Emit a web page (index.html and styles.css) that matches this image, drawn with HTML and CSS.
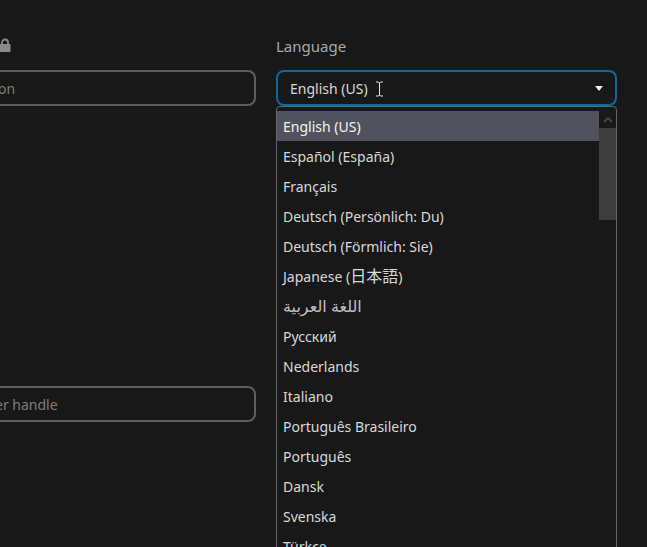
FILE: index.html
```html
<!DOCTYPE html>
<html lang="en">
<head>
    <meta charset="UTF-8">
    <meta name="viewport" content="width=device-width, initial-scale=1.0">
    <title>Settings</title>
    <link rel="stylesheet" href="styles.css">
</head>
<body>
    <div class="settings">
        <div class="column">
            <div class="field">
                <label class="field-label">My location
                    <svg class="lock" viewBox="0 0 12 14" width="12" height="14">
                        <path d="M3 7V4.5a3 3 0 0 1 6 0V7" fill="none" stroke="#8a8a8a" stroke-width="1.8"/>
                        <rect x="0.5" y="6" width="11" height="8" rx="0.8" fill="#8a8a8a"/>
                    </svg>
                </label>
                <input class="text-input" type="text" placeholder="Your location">
            </div>
            <div class="field field-handle">
                <input class="text-input" type="text" placeholder="Your Twitter handle">
            </div>
        </div>
        <div class="column">
            <div class="field">
                <label class="field-label">Language</label>
                <div class="select">
                    <span>English (US)</span>
                    <svg class="ibeam" viewBox="0 0 9 16" width="9" height="16">
                        <path d="M1 1h2.5L4.5 2l1-1H8M4.5 2v12M1 15h2.5l1-1 1 1H8" fill="none" stroke="#e8e8e8" stroke-width="1"/>
                    </svg>
                    <span class="caret"></span>
                </div>
                <div class="dropdown">
                    <ul class="options">
                        <li class="selected">English (US)</li>
                        <li>Español (España)</li>
                        <li>Français</li>
                        <li>Deutsch (Persönlich: Du)</li>
                        <li>Deutsch (Förmlich: Sie)</li>
                        <li class="tall">Japanese (<span class="kanji" lang="ja">日本語</span>)</li>
                        <li class="tall arabic">اللغة العربية</li>
                        <li>Русский</li>
                        <li>Nederlands</li>
                        <li>Italiano</li>
                        <li>Português Brasileiro</li>
                        <li>Português</li>
                        <li>Dansk</li>
                        <li>Svenska</li>
                        <li>Türkçe</li>
                    </ul>
                    <div class="scrollbar">
                        <div class="scroll-up">
                            <svg viewBox="0 0 10 6" width="10" height="6">
                                <path d="M1 5l4-4 4 4" fill="none" stroke="#444" stroke-width="2"/>
                            </svg>
                        </div>
                        <div class="scroll-thumb"></div>
                    </div>
                </div>
            </div>
        </div>
    </div>
</body>
</html>
```

FILE: styles.css
```css
html, body {
    height: 100%;
    overflow: hidden;
}
body {
    margin: 0;
    background-color: #181818;
    color: #d8d8d8;
    font-family: 'Noto Sans', 'DejaVu Sans', 'Noto Sans CJK JP', sans-serif;
    font-size: 14px;
}
.settings {
    display: grid;
    grid-template-columns: 341px 341px;
    gap: 20px;
    margin-left: -85px;
    padding-top: 35px;
}
.field {
    position: relative;
}
.field-handle {
    margin-top: 280px;
}
.field-label {
    display: flex;
    align-items: center;
    gap: 3px;
    height: 22px;
    margin-bottom: 13px;
    font-size: 15px;
    color: #a8a8a8;
}
.lock {
    display: block;
    margin-top: -3px;
}
.text-input {
    display: block;
    box-sizing: border-box;
    width: 100%;
    height: 36px;
    padding: 0 12px;
    background: transparent;
    border: 2px solid #5e5e5e;
    border-radius: 8px;
    font: inherit;
    color: #d8d8d8;
    outline: none;
}
.text-input::placeholder {
    color: #7c7c7c;
    opacity: 1;
}
.select {
    display: flex;
    align-items: center;
    box-sizing: border-box;
    height: 36px;
    padding: 0 12px;
    border: 2px solid #0a6a9e;
    border-radius: 8px;
}
.ibeam {
    margin-left: 7px;
    margin-top: 2px;
}
.caret {
    margin-left: auto;
    border-left: 4px solid transparent;
    border-right: 4px solid transparent;
    border-top: 5px solid #f0f0f0;
}
.dropdown {
    position: absolute;
    top: 71px;
    left: 0;
    right: 0;
    display: flex;
    box-sizing: border-box;
    padding-top: 4px;
    background-color: #181818;
    border: 1px solid #666;
    border-radius: 4px;
}
.options {
    flex: 1;
    margin: 0;
    padding: 0;
    list-style: none;
}
.options li {
    height: 30px;
    padding-left: 6px;
    line-height: 32px;
    white-space: nowrap;
}
.options .selected {
    background-color: #52525c;
    color: #f2f2f2;
}
.options .tall {
    line-height: 30px;
}
.options .arabic {
    font-size: 16px;
    color: #c0c0c0;
}
.kanji {
    font-size: 16px;
}
.scrollbar {
    width: 17px;
}
.scroll-up {
    display: flex;
    align-items: center;
    justify-content: center;
    height: 17px;
}
.scroll-thumb {
    height: 92px;
    background-color: #3c3c3c;
}
```
